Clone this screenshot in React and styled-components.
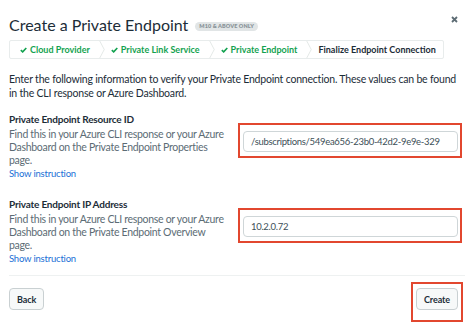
import styled, { createGlobalStyle } from 'styled-components';

const GlobalStyle = createGlobalStyle`
  html, body {
    margin: 0;
    padding: 0;
    background: #ffffff;
  }
  body {
    font-family: 'Lato', 'Open Sans', sans-serif;
    color: #21313c;
  }
`;

const steps = [
  { label: 'Cloud Provider', done: true },
  { label: 'Private Link Service', done: true },
  { label: 'Private Endpoint', done: true },
  { label: 'Finalize Endpoint Connection', done: false },
];

const fields = [
  {
    label: 'Private Endpoint Resource ID',
    help: 'Find this in your Azure CLI response or your Azure Dashboard on the Private Endpoint Properties page.',
    value: '/subscriptions/549ea656-23b0-42d2-9e9e-329',
  },
  {
    label: 'Private Endpoint IP Address',
    help: 'Find this in your Azure CLI response or your Azure Dashboard on the Private Endpoint Overview page.',
    value: '10.2.0.72',
  },
];

const Check = () => (
  <svg width='7' height='6' viewBox='0 0 7 6'>
    <path d='M0.8 3.1 L2.7 4.9 L6.3 1' fill='none' stroke='currentColor' strokeWidth='1.6' />
  </svg>
);

const Chevron = () => (
  <StyledChevron width='6' height='19' viewBox='0 0 6 19'>
    <path d='M0.5 0 L5.5 9.5 L0.5 19' fill='none' stroke='#e1e6e4' strokeWidth='1' />
  </StyledChevron>
);

const App = () => {
  return (
    <>
      <GlobalStyle />
      <StyledModal>
        <StyledHeader>
          <StyledTitle>Create a Private Endpoint</StyledTitle>
          <StyledBadge>M10 &amp; ABOVE ONLY</StyledBadge>
          <StyledClose aria-label='close'>
            <svg width='7' height='7' viewBox='0 0 7 7'>
              <path d='M1 1 L6 6 M6 1 L1 6' stroke='#5d6c74' strokeWidth='1.8' />
            </svg>
          </StyledClose>
        </StyledHeader>

        <StyledSteps>
          {steps.map((step, i) => (
            <StyledStepWrap key={step.label}>
              <StyledStep $done={step.done} $first={i === 0}>
                {step.done && <Check />}
                {step.label}
              </StyledStep>
              {i < steps.length - 1 && <Chevron />}
            </StyledStepWrap>
          ))}
        </StyledSteps>

        <StyledIntro>
          Enter the following information to verify your Private Endpoint connection. These values
          can be found in the CLI response or Azure Dashboard.
        </StyledIntro>

        {fields.map((field) => (
          <StyledField key={field.label}>
            <StyledFieldText>
              <StyledLabel>{field.label}</StyledLabel>
              <StyledHelp>{field.help}</StyledHelp>
              <StyledLink href='#'>Show instruction</StyledLink>
            </StyledFieldText>
            <StyledHighlight>
              <StyledInput readOnly value={field.value} />
            </StyledHighlight>
          </StyledField>
        ))}

        <StyledFooter>
          <StyledButton $offset>Back</StyledButton>
          <StyledButtonHighlight>
            <StyledButton>Create</StyledButton>
          </StyledButtonHighlight>
        </StyledFooter>
      </StyledModal>
    </>
  );
};

// Styles
const StyledModal = styled.div`
  width: 474px;
  height: 326px;
  box-sizing: border-box;
  padding: 14px 9px 0;
  overflow: hidden;
`;

const StyledHeader = styled.div`
  display: flex;
  align-items: center;
  height: 22px;
`;

const StyledTitle = styled.h1`
  margin: 0;
  font-size: 16px;
  font-weight: 400;
  line-height: 22px;
  color: #1c2d38;
`;

const StyledBadge = styled.span`
  margin-left: 7px;
  margin-top: 2px;
  padding: 0 4px;
  height: 9px;
  line-height: 9px;
  border-radius: 5px;
  background: #e1e5e6;
  color: #8a9499;
  font-size: 5.5px;
  font-weight: 800;
  letter-spacing: 0.1px;
`;

const StyledClose = styled.button`
  margin-left: auto;
  margin-right: 7px;
  align-self: flex-start;
  margin-top: 2px;
  padding: 0;
  border: none;
  background: none;
  display: flex;
`;

const StyledSteps = styled.div`
  margin-top: 4px;
  width: 435px;
  height: 19px;
  box-sizing: border-box;
  border: 1px solid #e8ecec;
  border-radius: 2px;
  display: flex;
  align-items: stretch;
  overflow: hidden;
`;

const StyledStepWrap = styled.div`
  display: flex;
  align-items: center;
`;

const StyledStep = styled.span`
  display: flex;
  align-items: center;
  gap: 3px;
  padding: 0 9px 0 ${({ $first }) => ($first ? '10px' : '6px')};
  font-size: 9px;
  font-weight: 700;
  color: ${({ $done }) => ($done ? '#13a250' : '#1c2d38')};
  white-space: nowrap;
`;

const StyledChevron = styled.svg`
  display: block;
  height: 17px;
`;

const StyledIntro = styled.p`
  margin: 13px 0 0;
  font-size: 10.5px;
  letter-spacing: -0.2px;
  line-height: 14px;
  color: #1c2d38;
`;

const StyledField = styled.div`
  display: grid;
  grid-template-columns: 229px 224px;
  margin-top: 13px;
  & + & {
    margin-top: 18px;
  }
`;

const StyledFieldText = styled.div`
  width: 218px;
`;

const StyledLabel = styled.div`
  font-size: 10px;
  font-weight: 700;
  letter-spacing: -0.2px;
  line-height: 13px;
  color: #1c2d38;
`;

const StyledHelp = styled.div`
  margin-top: 2px;
  font-size: 10.5px;
  letter-spacing: -0.3px;
  line-height: 13px;
  color: #5c6c75;
`;

const StyledLink = styled.a`
  display: block;
  font-size: 9.5px;
  letter-spacing: -0.2px;
  line-height: 13px;
  color: #1a6fd6;
  text-decoration: none;
`;

const StyledHighlight = styled.div`
  margin-top: 10px;
  align-self: start;
  border: 2px solid #e2472f;
  padding: 6px 2px 4px 3px;
`;

const StyledInput = styled.input`
  display: block;
  width: 100%;
  height: 21px;
  box-sizing: border-box;
  border: 1px solid #cfd6d8;
  border-radius: 4px;
  padding: 0 7px;
  font-family: inherit;
  font-size: 9.5px;
  letter-spacing: -0.3px;
  color: #3d4f58;
  outline: none;
`;

const StyledFooter = styled.div`
  margin-top: 10px;
  padding: 6px 2px 0 0;
  border-top: 1px solid #eef1f1;
  display: flex;
  justify-content: space-between;
  align-items: flex-start;
`;

const StyledButton = styled.button`
  display: block;
  margin-top: ${({ $offset }) => ($offset ? '6px' : '0')};
  height: 22px;
  padding: 0 7px;
  border: 1px solid #c9d0d2;
  border-radius: 4px;
  background: #f7f9f9;
  font-family: inherit;
  font-size: 9px;
  font-weight: 700;
  letter-spacing: -0.1px;
  color: #1c2d38;
`;

const StyledButtonHighlight = styled.div`
  border: 2px solid #e2472f;
  padding: 4px 3px 10px;
`;

export default App;
